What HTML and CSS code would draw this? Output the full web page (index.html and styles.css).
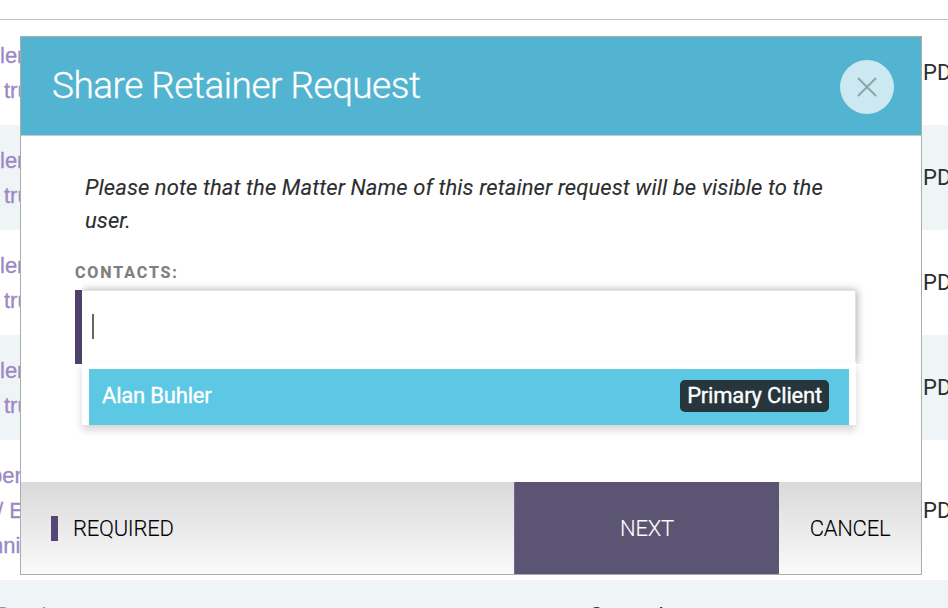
FILE: index.html
```html
<!DOCTYPE html>
<html lang="en">
<head>
<meta charset="utf-8">
<title>Share Retainer Request</title>
<link rel="stylesheet" href="styles.css">
</head>
<body>
<div class="list">
  <div class="row"><div class="names"><span>ler</span><span class="in4">tru</span></div><div class="type">PD</div></div>
  <div class="row alt"><div class="names"><span>ler</span><span class="in4">tru</span></div><div class="type">PD</div></div>
  <div class="row"><div class="names"><span>ler</span><span class="in4">tru</span></div><div class="type">PD</div></div>
  <div class="row alt"><div class="names"><span>ler</span><span class="in4">tru</span></div><div class="type">PD</div></div>
  <div class="row tall"><div class="names"><span class="out">per</span><span class="out2">/ E</span><span class="out3">nni</span></div><div class="type">PD</div></div>
  <div class="row alt last"><span class="link">Road</span><span class="status">General</span></div>
</div>
<div class="modal" role="dialog">
  <header class="head">
    <h1>Share Retainer Request</h1>
    <button class="close" aria-label="Close"><svg width="20" height="20" viewBox="0 0 20 20"><path d="M1 1 19 19"/><path d="M19 1 1 19"/></svg></button>
  </header>
  <main class="body">
    <p class="note">Please note that the Matter Name of this retainer request will be visible to the user.</p>
    <div class="label">Contacts:</div>
    <div class="field">
      <div class="input"><div class="control"><span class="caret"></span></div></div>
      <div class="menu"><div class="option"><span>Alan Buhler</span><span class="tag">Primary Client</span></div></div>
    </div>
  </main>
  <footer class="foot">
    <div class="required"><i></i><span>REQUIRED</span></div>
    <button class="next">NEXT</button>
    <button class="cancel">CANCEL</button>
  </footer>
</div>
</body>
</html>
```
FILE: styles.css
```css
* { box-sizing: border-box; }
body { margin: 0; height: 608px; overflow: hidden; background: #fff; font-family: Roboto, "Liberation Sans", sans-serif; color: #2d2e2f; }
button { border: 0; padding: 0; margin: 0; font: inherit; }
.list { margin-top: 19px; height: 589px; overflow: hidden; border-top: 1px solid #c2c2c2; font-size: 22px; }
.row { display: flex; justify-content: space-between; align-items: center; height: 105px; overflow: hidden; }
.row.alt { background: #eff4f7; }
.row.tall { height: 140px; }
.names { display: flex; flex-direction: column; width: 60px; color: #9b88c4; line-height: 35px; font-family: "Liberation Sans", sans-serif; -webkit-text-stroke: .3px #9b88c4; }
.in4 { margin-left: 4px; }
.out { margin-left: -10px; }
.out2 { margin-left: -3px; }
.out3 { margin-left: -9px; }
.type { width: 25px; white-space: nowrap; font-size: 22px; }
.row.last { justify-content: flex-start; align-items: flex-start; padding-top: 23px; line-height: 26px; }
.link { width: 593px; margin-left: -4px; color: #9b88c4; }
.modal { position: absolute; left: 20px; top: 36px; width: 902px; height: 539px; display: flex; flex-direction: column; background: #fff; border: 1px solid #aaadae; }
.head { display: flex; justify-content: space-between; align-items: center; height: 99px; padding: 0 27px 0 31px; background: #52b4d0; border-bottom: 1px solid #c0cdd3; color: #fff; }
h1 { margin: 0; font-size: 37px; font-weight: 300; line-height: 44px; letter-spacing: -.5px; -webkit-text-stroke: .3px #fff; }
.close { display: grid; place-items: center; width: 54px; height: 54px; border-radius: 50%; background: #cce8f0; margin-top: 2px; }
.close svg { fill: none; stroke: #86a5ae; stroke-width: 2; margin: -1px 0 0 -1px; }
.body { flex: 1; padding: 35px 65px 0 54px; }
.note { margin: 0 0 0 10px; font-size: 22px; line-height: 33px; font-style: italic; letter-spacing: .08px; -webkit-text-stroke: .1px #2d2e2f; }
.label { margin-top: 26px; font-size: 16px; line-height: 20px; font-weight: 700; letter-spacing: 1.9px; text-transform: uppercase; color: #7f7f7f; -webkit-text-stroke: .2px #7f7f7f; }
.field { margin-top: 7px; }
.input { height: 74px; border-left: 7px solid #4e426d; }
.control { display: flex; align-items: center; height: 74px; padding: 0 0 1px 10px; border: 1px solid #e2e2e2; border-left-width: 0; background: #fff; box-shadow: 1px 0 8px rgba(0,0,0,.32); clip-path: inset(-12px -12px 0 0); }
.caret { width: 2px; height: 25px; background: #666; }
.menu { position: relative; margin-left: 7px; margin-top: -2px; padding: 7px 7px 0; background: #fff; box-shadow: 0 5px 8px rgba(0,0,0,.17); }
.option { display: flex; justify-content: space-between; align-items: center; height: 56px; padding: 0 20px 2px 13px; background: #5cc8e4; color: #fff; font-size: 22px; letter-spacing: -.19px; -webkit-text-stroke: .35px #fff; }
.option > span:first-child { margin-top: -1px; }
.tag { height: 32px; padding: 0 7px; border-radius: 5px; background: #27353c; line-height: 32px; }
.foot { display: flex; height: 92px; background: linear-gradient(#d9d9d9, #fafafa); font-size: 22px; font-weight: 300; letter-spacing: -.25px; color: #000; -webkit-text-stroke: .1px; }
.required { display: flex; align-items: center; flex: 1; padding-left: 30px; gap: 15px; }
.required i { width: 7px; height: 25px; background: #544675; }
.next { width: 265px; background: #5c5473; color: #fff; border-left: 1px solid #706886; }
.cancel { width: 142px; background: transparent; color: #000; }
.next, .cancel { letter-spacing: inherit; }
```
